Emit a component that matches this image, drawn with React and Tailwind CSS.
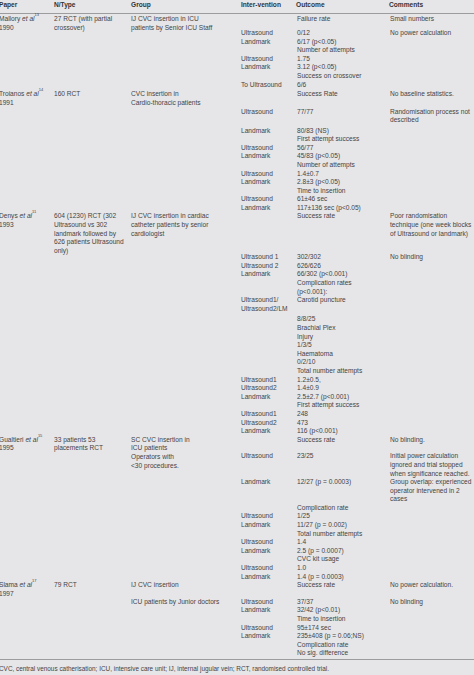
// Comparison table of ultrasound-guided vs landmark CVC insertion trials.
const studies = [
  {
    name: 'Mallory',
    refNo: '13',
    year: '1990',
    ntype: ['27 RCT (with partial', 'crossover)'],
    group: ['IJ CVC insertion in ICU', 'patients by Senior ICU Staff'],
    rows: [
      { o: ['Failure rate'], c: ['Small numbers'] },
      { gap: 'mt-[5.5px]', i: ['Ultrasound'], o: ['0/12'], c: ['No power calculation'] },
      { i: ['Landmark'], o: ['6/17 (p<0.05)'] },
      { o: ['Number of attempts'] },
      { i: ['Ultrasound'], o: ['1.75'] },
      { i: ['Landmark'], o: ['3.12 (p<0.05)'] },
      { o: ['Success on crossover'] },
      { i: ['To Ultrasound'], o: ['6/6'] },
    ],
  },
  {
    gap: 'mt-[1px]',
    name: 'Troianos',
    refNo: '14',
    year: '1991',
    ntype: ['160 RCT'],
    group: ['CVC insertion in', 'Cardio-thoracic patients'],
    rows: [
      { o: ['Success Rate'], c: ['No baseline statistics.'] },
      { gap: 'mt-[9px]', i: ['Ultrasound'], o: ['77/77'], c: ['Randomisation process not', 'described'] },
      { gap: 'mt-[1.5px]', i: ['Landmark'], o: ['80/83 (NS)'] },
      { o: ['First attempt success'] },
      { i: ['Ultrasound'], o: ['56/77'] },
      { i: ['Landmark'], o: ['45/83 (p<0.05)'] },
      { o: ['Number of attempts'] },
      { i: ['Ultrasound'], o: ['1.4±0.7'] },
      { i: ['Landmark'], o: ['2.8±3 (p<0.05)'] },
      { o: ['Time to insertion'] },
      { i: ['Ultrasound'], o: ['61±46 sec'] },
      { i: ['Landmark'], o: ['117±136 sec (p<0.05)'] },
    ],
  },
  {
    name: 'Denys',
    refNo: '11',
    year: '1993',
    ntype: ['604 (1230) RCT (302', 'Ultrasound vs 302', 'landmark followed by', '626 patients Ultrasound', 'only)'],
    group: ['IJ CVC insertion in cardiac', 'catheter patients by senior', 'cardiologist'],
    rows: [
      {
        o: ['Success rate'],
        c: ['Poor randomisation', 'technique (one week blocks', 'of Ultrasound or landmark)'],
      },
      { gap: 'mt-[15px]', i: ['Ultrasound 1'], o: ['302/302'], c: ['No blinding'] },
      { i: ['Ultrasound 2'], o: ['626/626'] },
      { i: ['Landmark'], o: ['66/302 (p<0.001)'] },
      { o: ['Complication rates'] },
      { o: ['(p<0.001):'] },
      { i: ['Ultrasound1/', 'Ultrasound2/LM'], o: ['Carotid puncture'] },
      { gap: 'mt-[2px]', o: ['8/8/25'] },
      { o: ['Brachial Plex'] },
      { o: ['Injury'] },
      { o: ['1/3/5'] },
      { o: ['Haematoma'] },
      { o: ['0/2/10'] },
      { o: ['Total number attempts'] },
      { i: ['Ultrasound1'], o: ['1.2±0.5,'] },
      { i: ['Ultrasound2'], o: ['1.4±0.9'] },
      { i: ['Landmark'], o: ['2.5±2.7 (p<0.001)'] },
      { o: ['First attempt success'] },
      { i: ['Ultrasound1'], o: ['248'] },
      { i: ['Ultrasound2'], o: ['473'] },
      { i: ['Landmark'], o: ['116 (p<0.001)'] },
    ],
  },
  {
    name: 'Gualtieri',
    refNo: '15',
    year: '1995',
    ntype: ['33 patients 53', 'placements RCT'],
    group: ['SC CVC insertion in', 'ICU patients', 'Operators with', '<30 procedures.'],
    rows: [
      { o: ['Success rate'], c: ['No blinding.'] },
      {
        gap: 'mt-[8px]',
        i: ['Ultrasound'],
        o: ['23/25'],
        c: ['Initial power calculation', 'ignored and trial stopped', 'when significance reached.'],
      },
      {
        i: ['Landmark'],
        o: ['12/27 (p = 0.0003)'],
        c: ['Group overlap: experienced', 'operator intervened in 2', 'cases'],
      },
      { o: ['Complication rate'] },
      { i: ['Ultrasound'], o: ['1/25'] },
      { i: ['Landmark'], o: ['11/27 (p = 0.002)'] },
      { o: ['Total number attempts'] },
      { i: ['Ultrasound'], o: ['1.4'] },
      { i: ['Landmark'], o: ['2.5 (p = 0.0007)'] },
      { o: ['CVC kit usage'] },
      { i: ['Ultrasound'], o: ['1.0'] },
      { i: ['Landmark'], o: ['1.4 (p = 0.0003)'] },
    ],
  },
  {
    name: 'Slama',
    refNo: '17',
    year: '1997',
    ntype: ['79 RCT'],
    group: ['IJ CVC insertion', '', 'ICU patients by Junior doctors'],
    rows: [
      { o: ['Success rate'], c: ['No power calculation.'] },
      { gap: 'mt-[8px]', i: ['Ultrasound'], o: ['37/37'], c: ['No blinding'] },
      { i: ['Landmark'], o: ['32/42 (p<0.01)'] },
      { o: ['Time to insertion'] },
      { i: ['Ultrasound'], o: ['95±174 sec'] },
      { i: ['Landmark'], o: ['235±408 (p = 0.06;NS)'] },
      { o: ['Complication rate'] },
      { o: ['No sig. difference'] },
    ],
  },
];

function Lines({ lines = [], className = '' }) {
  return (
    <div className={className}>
      {lines.map((t, k) => (
        <div key={k} className="whitespace-nowrap">
          {t || '\u00a0'}
        </div>
      ))}
    </div>
  );
}

function Study({ s }) {
  return (
    <div className={`flex ${s.gap || ''}`}>
      <div className="w-[55px] shrink-0">
        <div className="whitespace-nowrap">
          {s.name} <i>et al</i>
          <sup className="text-[4px] align-top leading-none">{s.refNo}</sup>
        </div>
        <div>{s.year}</div>
      </div>
      <Lines lines={s.ntype} className="w-[77px] shrink-0" />
      <Lines lines={s.group} className="w-[110px] shrink-0" />
      <div className="flex flex-1 flex-col">
        {s.rows.map((r, k) => (
          <div key={k} className={`grid grid-cols-[56px_93px_1fr] ${r.gap || ''}`}>
            <Lines lines={r.i} />
            <Lines lines={r.o} />
            <Lines lines={r.c} />
          </div>
        ))}
      </div>
    </div>
  );
}

export default function App() {
  return (
    <div
      className="h-[675px] w-[474px] overflow-hidden bg-[#e6e6e8] text-[6.6px] leading-[8.6px] text-[#444446]"
      style={{ fontFamily: '"Liberation Sans", Arial, sans-serif' }}
    >
      <div className="-ml-px">
        <div className="flex h-[14px] border-b border-[#9c9c9e] pt-[1px] font-bold text-[#333335]">
          <div className="w-[55px] shrink-0">Paper</div>
          <div className="w-[77px] shrink-0">N/Type</div>
          <div className="w-[110px] shrink-0">Group</div>
          <div className="w-[55px] shrink-0">Inter-vention</div>
          <div className="w-[93px] shrink-0">Outcome</div>
          <div>Comments</div>
        </div>

        <div className="border-b border-[#9c9c9e] pt-[1px] pb-[1.5px]">
          {studies.map((s) => (
            <Study key={s.name} s={s} />
          ))}
        </div>

        <div className="whitespace-nowrap pt-[5px] text-[6.4px] leading-[8px]">
          CVC, central venous catherisation; ICU, intensive care unit; IJ, internal jugular vein; RCT,
          randomised controlled trial.
        </div>
      </div>
    </div>
  );
}
